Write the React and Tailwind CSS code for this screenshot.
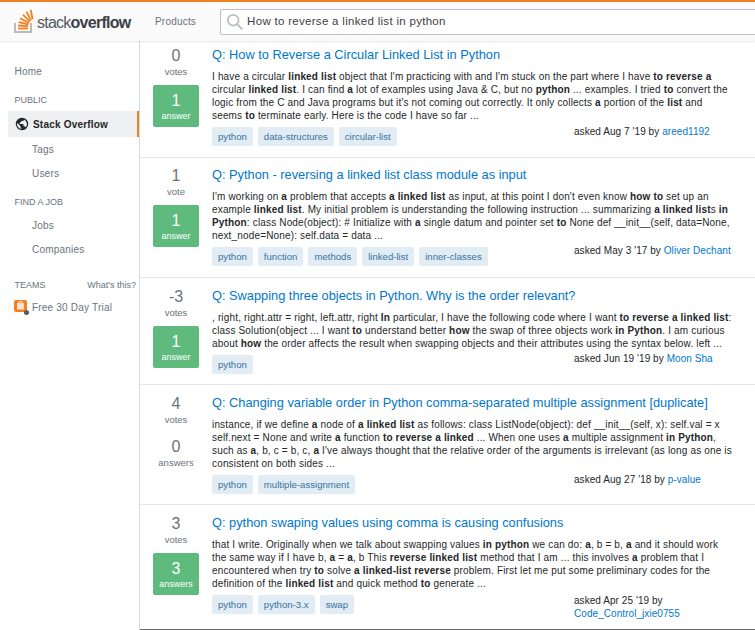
import React from "react";

const B = ({ children }) => <b className="font-bold">{children}</b>;

const questions = [
  {
    title: "Q: How to Reverse a Circular Linked List in Python",
    votes: "0", voteLabel: "votes", answers: "1", answerLabel: "answer", accepted: true,
    h: "h-[117px]", pad: "pt-0", authorPos: "-mt-[2px]",
    body: [
      <>I have a circular <B>linked list</B> object that I'm practicing with and I'm stuck on the part where I have <B>to reverse a</B></>,
      <>circular <B>linked list</B>. I can find <B>a</B> lot of examples using Java &amp; C, but no <B>python</B> ... examples. I tried <B>to</B> convert the</>,
      <>logic from the C and Java programs but it's not coming out correctly. It only collects <B>a</B> portion of the <B>list</B> and</>,
      <>seems <B>to</B> terminate early. Here is the code I have so far ...</>,
    ],
    tags: ["python", "data-structures", "circular-list"],
    asked: "asked Aug 7 '19 by", author: "areed1192",
  },
  {
    title: "Q: Python - reversing a linked list class module as input",
    votes: "1", voteLabel: "vote", answers: "1", answerLabel: "answer", accepted: true,
    h: "h-[120px]", pad: "pt-[3px]", authorPos: "-mt-[3px]",
    body: [
      <>I'm working on <B>a</B> problem that accepts <B>a linked list</B> as input, at this point I don't even know <B>how to</B> set up an</>,
      <>example <B>linked list</B>. My initial problem is understanding the following instruction ... summarizing <B>a linked list</B>s <B>in</B></>,
      <><B>Python</B>: class Node(object): # Initialize with <B>a</B> single datum and pointer set <B>to</B> None def __init__(self, data=None,</>,
      <>next_node=None): self.data = data ...</>,
    ],
    tags: ["python", "function", "methods", "linked-list", "inner-classes"],
    asked: "asked May 3 '17 by", author: "Oliver Dechant",
  },
  {
    title: "Q: Swapping three objects in Python. Why is the order relevant?",
    votes: "-3", voteLabel: "votes", answers: "1", answerLabel: "answer", accepted: true,
    h: "h-[107px]", pad: "pt-[4px]", authorPos: "-mt-[3px]",
    body: [
      <>, right, right.attr = right, left.attr, right <B>In</B> particular, I have the following code where I want <B>to reverse a linked list</B>:</>,
      <>class Solution(object ... I want <B>to</B> understand better <B>how</B> the swap of three objects work <B>in Python</B>. I am curious</>,
      <>about <B>how</B> the order affects the result when swapping objects and their attributes using the syntax below. left ...</>,
    ],
    tags: ["python"],
    asked: "asked Jun 19 '19 by", author: "Moon Sha",
  },
  {
    title: "Q: Changing variable order in Python comma-separated multiple assignment [duplicate]",
    votes: "4", voteLabel: "votes", answers: "0", answerLabel: "answers", accepted: false,
    h: "h-[120px]", pad: "pt-[4px]", authorPos: "-mt-[2px]",
    body: [
      <>instance, if we define <B>a</B> node of <B>a linked list</B> as follows: class ListNode(object): def __init__(self, x): self.val = x</>,
      <>self.next = None and write <B>a</B> function <B>to reverse a linked</B> ... When one uses <B>a</B> multiple assignment <B>in Python</B>,</>,
      <>such as <B>a</B>, b, c = b, c, <B>a</B> I've always thought that the relative order of the arguments is irrelevant (as long as one is</>,
      <>consistent on both sides ...</>,
    ],
    tags: ["python", "multiple-assignment"],
    asked: "asked Aug 27 '18 by", author: "p-value",
  },
  {
    title: "Q: python swaping values using comma is causing confusions",
    votes: "3", voteLabel: "votes", answers: "3", answerLabel: "answers", accepted: true,
    h: "h-[124px]", pad: "pt-[4px]", authorPos: "-mt-[1px]",
    body: [
      <>that I write. Originally when we talk about swapping values <B>in python</B> we can do: <B>a</B>, b = b, <B>a</B> and it should work</>,
      <>the same way if I have b, <B>a</B> = <B>a</B>, b This <B>reverse linked list</B> method that I am ... this involves <B>a</B> problem that I</>,
      <>encountered when try <B>to</B> solve <B>a linked-list reverse</B> problem. First let me put some preliminary codes for the</>,
      <>definition of the <B>linked list</B> and quick method <B>to</B> generate ...</>,
    ],
    tags: ["python", "python-3.x", "swap"],
    asked: "asked Apr 25 '19 by", author: "Code_Control_jxie0755", wrap: true,
  },
];

function Logo() {
  return (
    <svg width="20" height="25" viewBox="0 0 20 25" className="shrink-0">
      <path d="M0 14v10h18v-10h-2v8H2v-8z" fill="#bcbbbb" />
      <path d="M4 18.6h10v1.8H4z" fill="#f48024" />
      <path d="M4.2 15.6l10 .9-.2 1.8-10-.9z" fill="#f48024" />
      <path d="M5 12.2l9.7 2.4-.5 1.8-9.7-2.4z" fill="#f48024" />
      <path d="M6.6 8.4l8.8 4.8-.9 1.6-8.8-4.8z" fill="#f48024" />
      <path d="M9.6 5l7 7-1.3 1.3-7-7z" fill="#f48024" />
      <path d="M13.2 2.2l4.6 8.7-1.6.9-4.6-8.7z" fill="#f48024" />
      <path d="M17.6 0.6l1.9 9.5-1.8.4-1.9-9.5z" fill="#f48024" />
    </svg>
  );
}

function Globe() {
  return (
    <svg width="14" height="14" viewBox="0 0 18 18" className="shrink-0">
      <path fill="#242729" d="M9 1a8 8 0 1 0 0 16A8 8 0 0 0 9 1zM8 15.32a6.4 6.4 0 0 1-5.23-7.75L7 11.68v.8c0 .88.12 1.32 1 1.32v1.52zm5.72-2c-.2-.66-1-1.32-1.72-1.32h-1V10c0-.55-.45-1-1-1H6V7h1c.55 0 1-.45 1-1V5h2c.88 0 1.55-.45 1.55-1.33v-.33a6.4 6.4 0 0 1 2.17 10z" />
    </svg>
  );
}

function Stats({ q }) {
  return (
    <div className="w-[46px] ml-[13px] shrink-0 flex flex-col items-center">
      <div className="mt-[5px] text-[16px] leading-[20px] text-[#6a737c]">{q.votes}</div>
      <div className="text-[9.5px] leading-[12px] text-[#6a737c]">{q.voteLabel}</div>
      {q.accepted ? (
        <div className="mt-[7px] w-[46px] h-[42px] rounded-[2px] bg-[#5eba7d] text-white flex flex-col items-center">
          <div className="text-[16px] leading-[20px] mt-[6px]">{q.answers}</div>
          <div className="text-[9px] leading-[12px] -mt-[1px]">{q.answerLabel}</div>
        </div>
      ) : (
        <div className="mt-[11px] w-[46px] flex flex-col items-center text-[#6a737c]">
          <div className="text-[16px] leading-[20px]">{q.answers}</div>
          <div className="text-[9.5px] leading-[12px]">{q.answerLabel}</div>
        </div>
      )}
    </div>
  );
}

function Row({ q, last }) {
  return (
    <div className={`flex ${q.h} ${q.pad} shrink-0 ${last ? "" : "border-b border-[#e4e6e8]"}`}>
      <Stats q={q} />
      <div className="ml-[13px] flex-1 min-w-0 flex flex-col">
        <a className="mt-[4px] text-[12.8px] leading-[19px] text-[#0077cc] whitespace-nowrap">{q.title}</a>
        <div className="mt-[6px] text-[10px] leading-[13px] text-[#242729] tracking-[0.16px]">
          {q.body.map((l, i) => (
            <div key={i} className="whitespace-nowrap">{l}</div>
          ))}
        </div>
        <div className="mt-[5px] flex justify-between">
          <div className="flex gap-[5px]">
            {q.tags.map((t) => (
              <span key={t} className="h-[19px] px-[6px] rounded-[2px] bg-[#e1ecf4] text-[#39739d] text-[9.6px] leading-[19px] whitespace-nowrap">{t}</span>
            ))}
          </div>
          <div className={`w-[181px] shrink-0 text-[10px] leading-[13px] text-[#242729] tracking-[0.06px] ${q.authorPos}`}>
            {q.asked} {q.wrap ? <br /> : null}<a className="text-[#0077cc]">{q.author}</a>
          </div>
        </div>
      </div>
    </div>
  );
}

const Item = ({ children }) => (
  <div className="pl-[32px] pt-[2px] text-[10px] leading-[22px] text-[#6a737c] tracking-[0.2px]">{children}</div>
);

const Label = ({ children, className = "" }) => (
  <div className={`pl-[14.5px] text-[9px] leading-[13px] text-[#6a737c] ${className}`}>{children}</div>
);

export default function App() {
  return (
    <div className="w-[755px] h-[630px] overflow-hidden flex flex-col bg-white font-['Liberation_Sans',Arial,sans-serif]">
      <header className="h-[41px] shrink-0 border-t-[2px] border-[#f48024] bg-[#fafafb] flex items-center shadow-[0_1px_2px_rgba(0,0,0,0.1)] z-10">
        <div className="ml-[14px] flex items-end w-[117px]">
          <Logo />
          <span className="ml-[3px] text-[16px] leading-[22px] tracking-[-0.75px] text-[#3b4045] whitespace-nowrap">
            <span className="font-normal text-[#535a60]">stack</span><span className="font-bold">overflow</span>
          </span>
        </div>
        <span className="ml-[24px] text-[10px] tracking-[0.2px] text-[#6a737c]">Products</span>
        <div className="ml-[24px] flex-1 h-[26px] border border-r-0 border-[#bbc0c4] rounded-l-[2px] bg-white flex items-center">
          <svg width="16" height="16" viewBox="0 0 18 18" className="ml-[6px] shrink-0">
            <path fill="#bbc0c4" d="M12.86 11.32L18 16.5 16.5 18l-5.18-5.14v-.35a7 7 0 1 1 1.19-1.19h.35zM7 12A5 5 0 1 0 7 2a5 5 0 0 0 0 10z" />
          </svg>
          <span className="ml-[4px] text-[11.5px] tracking-[0.3px] text-[#3b4045]">How to reverse a linked list in python</span>
        </div>
      </header>

      <div className="flex-1 min-h-0 flex">
        <aside className="w-[140px] shrink-0 border-r border-[#d6d9dc] flex flex-col">
          <div className="pl-[14.5px] pt-[2px] mt-[18px] text-[10px] leading-[22px] text-[#6a737c] tracking-[0.2px]">Home</div>
          <Label className="mt-[11px]">PUBLIC</Label>
          <div className="ml-[8px] mt-[4px] h-[26px] w-[131px] bg-[#eff0f1] border-r-[2px] border-[#f48024] flex items-center pl-[7px] gap-[4px] text-[10px] font-bold text-[#242729] tracking-[0.2px]">
            <Globe />
            <span>Stack Overflow</span>
          </div>
          <Item>Tags</Item>
          <Item>Users</Item>
          <Label className="mt-[11px]">FIND A JOB</Label>
          <div className="mt-[4px]"><Item>Jobs</Item></div>
          <Item>Companies</Item>
          <div className="mt-[18px] pl-[14.5px] pr-[3px] flex justify-between text-[9px] leading-[13px] text-[#6a737c]">
            <span>TEAMS</span>
            <span>What's this?</span>
          </div>
          <div className="relative mt-[3px] flex items-center h-[24px]">
            <svg width="16" height="16" viewBox="0 0 16 16" className="ml-[14px] shrink-0">
              <rect x="0" y="1" width="13" height="12" rx="2" fill="#f48024" />
              <path d="M3 4h7v6.5H3z" fill="#fde3cd" />
              <path d="M5 4V2.5h3V4" stroke="#fde3cd" fill="none" />
              <circle cx="12.5" cy="13.5" r="2.5" fill="#535a60" />
            </svg>
            <span className="ml-[2px] text-[10px] text-[#6a737c] tracking-[0.2px]">Free 30 Day Trial</span>
          </div>
        </aside>
        <main className="flex-1 min-w-0 flex flex-col border-b border-[#6a6a6a]">
          {questions.map((q, i) => (
            <Row key={i} q={q} last={i === questions.length - 1} />
          ))}
        </main>
      </div>
    </div>
  );
}
